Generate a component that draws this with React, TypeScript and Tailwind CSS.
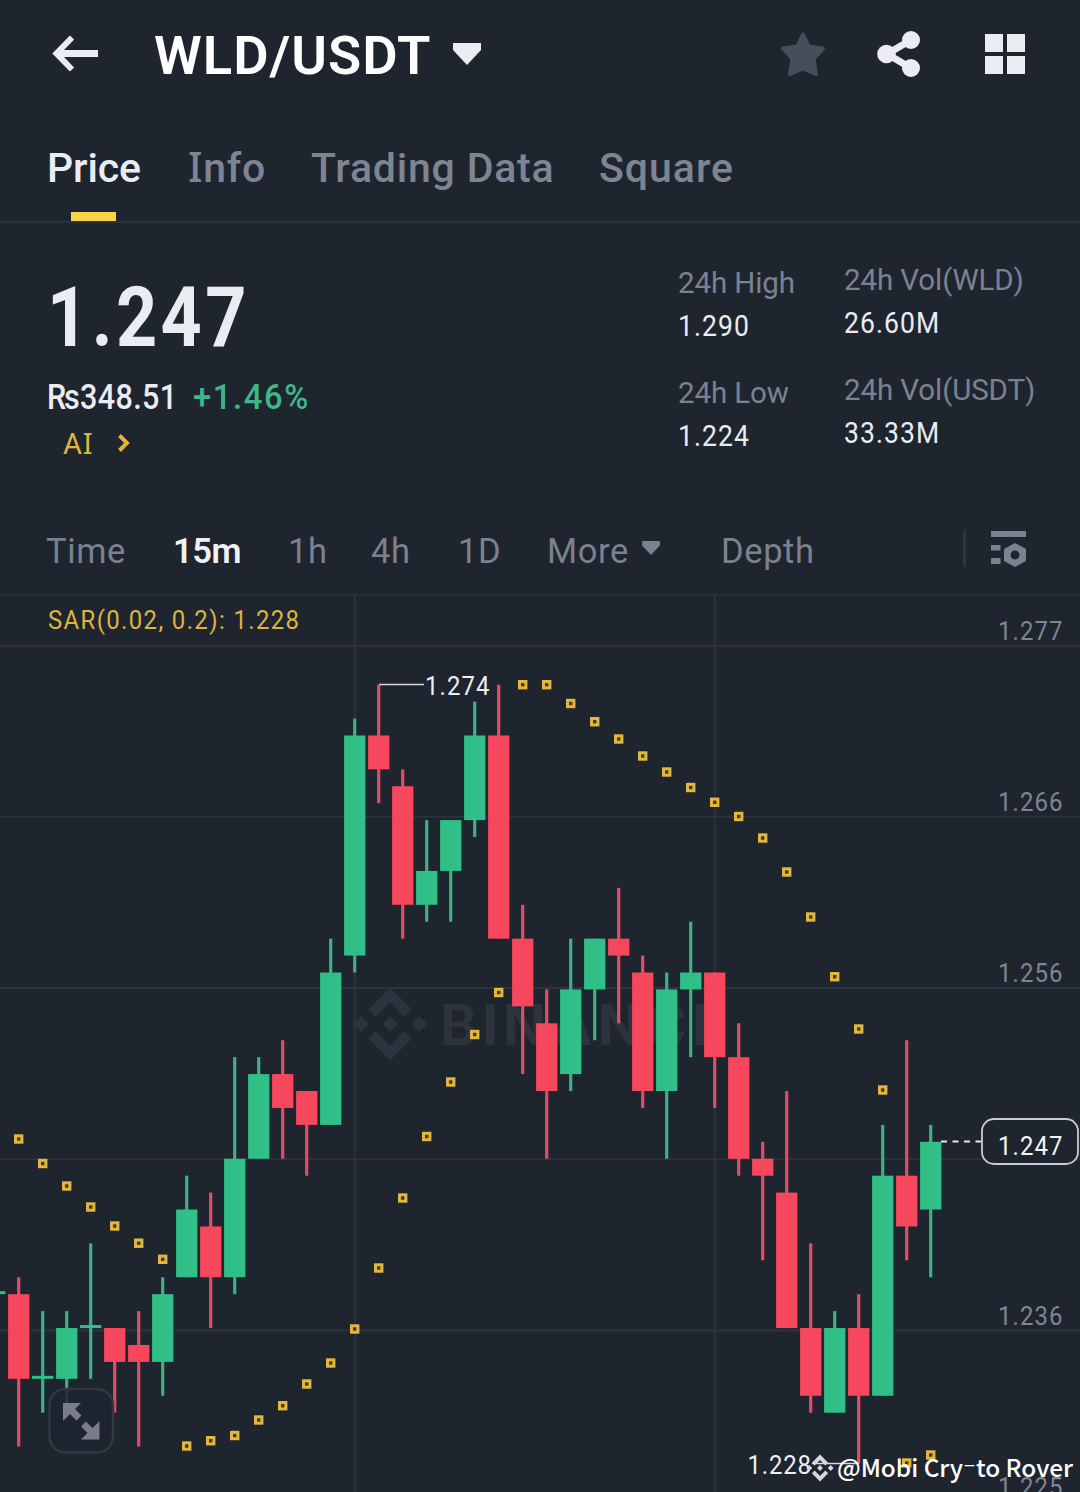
import type { ReactNode } from 'react'

const tabs = [
  { label: 'Price', width: 'w-[141px]', tracking: 'tracking-[-0.1px]' },
  { label: 'Info', width: 'w-[123px]', tracking: 'tracking-[0.7px]' },
  { label: 'Trading Data', width: 'w-[288px]', tracking: 'tracking-[0.8px]' },
  { label: 'Square', width: 'w-[140px]', tracking: 'tracking-[1px]' },
]

const intervals = [
  { label: 'Time', width: 'w-[127px]' },
  { label: '15m', width: 'w-[115px]' },
  { label: '1h', width: 'w-[83px]' },
  { label: '4h', width: 'w-[87px]' },
  { label: '1D', width: 'w-[89px]' },
  { label: 'More', width: 'w-[174px]' },
  { label: 'Depth', width: 'w-[100px]' },
]

// [open, close, high, low] in thousandths, one entry per 15m candle
const candles = [
  [1238, 1238, 1238, 1238],
  [1238, 1233, 1239, 1229],
  [1233, 1233, 1237, 1231],
  [1233, 1236, 1237, 1231],
  [1236, 1236, 1241, 1233],
  [1236, 1234, 1236, 1231],
  [1235, 1234, 1237, 1229],
  [1234, 1238, 1239, 1232],
  [1239, 1243, 1245, 1239],
  [1242, 1239, 1244, 1236],
  [1239, 1246, 1252, 1238],
  [1246, 1251, 1252, 1246],
  [1251, 1249, 1253, 1246],
  [1250, 1248, 1250, 1245],
  [1248, 1257, 1259, 1248],
  [1258, 1271, 1272, 1257],
  [1271, 1269, 1274, 1267],
  [1268, 1261, 1269, 1259],
  [1261, 1263, 1266, 1260],
  [1263, 1266, 1266, 1260],
  [1266, 1271, 1273, 1265],
  [1271, 1259, 1274, 1259],
  [1259, 1255, 1261, 1251],
  [1254, 1250, 1256, 1246],
  [1251, 1256, 1259, 1250],
  [1256, 1259, 1259, 1253],
  [1259, 1258, 1262, 1254],
  [1257, 1250, 1258, 1249],
  [1250, 1256, 1257, 1246],
  [1256, 1257, 1260, 1252],
  [1257, 1252, 1257, 1249],
  [1252, 1246, 1254, 1245],
  [1246, 1245, 1247, 1240],
  [1244, 1236, 1250, 1236],
  [1236, 1232, 1241, 1231],
  [1231, 1236, 1237, 1231],
  [1236, 1232, 1238, 1228],
  [1232, 1245, 1248, 1232],
  [1245, 1242, 1253, 1240],
  [1243, 1247, 1248, 1239],
]

// Parabolic SAR, chart y of each dot starting at the second candle
const sar = [
  1139, 1163.5, 1186, 1207, 1226, 1243.2, 1259.3, 1446, 1440.7, 1435.5, 1420, 1405.7, 1384, 1363,
  1329, 1268, 1198, 1136.5, 1082, 1034.5, 992.5, 684.7, 684.7, 703.5, 721.7, 739, 756, 772, 787.5,
  802.3, 816.5, 838, 872, 917, 976.7, 1029, 1090, 1463, 1455,
]

const axisLabels = [
  { text: '1.277', y: 640 },
  { text: '1.266', y: 811 },
  { text: '1.256', y: 982 },
  { text: '1.236', y: 1325 },
  { text: '1.225', y: 1496 },
]

const CHART_TOP = 594
const STEP = 24
const CONDENSE = 0.91

const priceY = (price: number) => 684.7 + (1274 - price) * 16.93
const candleX = (index: number) => index * STEP - 5.3

function SerifI() {
  return <span className="font-['Noto_Sans',sans-serif] leading-none">I</span>
}

function TriangleDown({ className }: { className: string }) {
  return (
    <svg className={className} viewBox="0 0 28 22" fill="currentColor">
      <path d="M0 0h28v7L14 22 0 7z" />
    </svg>
  )
}

function BinanceMark() {
  return (
    <>
      <path d="M0-36.500 22-14.500 14.500-7 0-21.500-14.500-7-22-14.500z" />
      <path d="M0 36.500 22 14.500 14.500 7 0 21.500-14.500 7-22 14.500z" />
      <path d="M0-8 8 0 0 8-8 0z" />
      <path d="M-29-8-21 0-29 8-37 0z" />
      <path d="M29-8 37 0 29 8 21 0z" />
    </>
  )
}

function Header() {
  return (
    <header className="flex h-[112px] items-center pr-[55px] pl-[52px] text-[#eaecf2]">
      <svg className="-mt-1.5 h-[38px] w-[46px]" viewBox="0 0 46 38" fill="none" stroke="currentColor">
        <path d="M46 19.500H5" strokeWidth="7" />
        <path d="M20 3.500 4.500 19.500 20 35.500" strokeWidth="6" />
      </svg>
      <h1 className="ml-[56px] w-[276px] text-[54.400px] font-semibold tracking-[1px] whitespace-nowrap text-white">WLD/USDT</h1>
      <TriangleDown className="-mt-1 ml-[23px] h-[22px] w-[28px]" />
      <div className="-mt-[5px] ml-auto flex items-center">
        <svg className="h-[48px] w-[46px] text-[#474d5b]" viewBox="0 0 46 48" fill="currentColor" stroke="currentColor" strokeWidth="4" strokeLinejoin="round">
          <path d="m23 4.500 5.500 12 14.500 2-9.500 10.500 2.500 15L23 38.500 10 44l2.500-15L3 18.500l14.500-2z" />
        </svg>
        <svg className="ml-[51px] h-[46px] w-[44px]" viewBox="0 0 44 46" fill="currentColor">
          <path d="M34 9 10 23l24 14" fill="none" stroke="currentColor" strokeWidth="7" />
          <circle cx="34" cy="9" r="9" />
          <circle cx="9.500" cy="23" r="9.300" />
          <circle cx="34" cy="37" r="9" />
        </svg>
        <div className="ml-[64px] grid grid-cols-2 gap-1">
          {[0, 1, 2, 3].map((i) => (
            <span key={i} className="size-[18px] bg-current" />
          ))}
        </div>
      </div>
    </header>
  )
}

function Tabs() {
  return (
    <nav className="flex h-[111px] border-b-2 border-[#2c323d] pt-[13px] pl-[47px] text-[41px] leading-[87px] font-medium">
      {tabs.map((tab, i) => (
        <div key={tab.label} className={tab.width}>
          <div className="inline-flex flex-col items-center">
            <span className={`whitespace-nowrap ${tab.tracking} ${i === 0 ? 'text-[#eaecf2]' : 'text-[#7e8592]'}`}>
              {tab.label === 'Info' ? <><SerifI />nfo</> : tab.label}
            </span>
            {i === 0 && <span className="mr-px h-[9px] w-[45px] bg-[#fad446]" />}
          </div>
        </div>
      ))}
    </nav>
  )
}

function StatColumn({ className, children }: { className: string; children: ReactNode }) {
  return <div className={`flex flex-col whitespace-nowrap text-[29.500px] ${className}`}>{children}</div>
}

function Stat({ label, value }: { label: string; value: string }) {
  return (
    <div>
      <div className="tracking-[-0.1px] text-[#7b828f]">{label}</div>
      <div className="origin-left scale-x-[0.9] tracking-[1.200px] text-[#eaecf2]">{value}</div>
    </div>
  )
}

function Summary() {
  return (
    <section className="flex h-[285px] pl-[47px]">
      <div className="w-[631px] pt-[45px]">
        <div className="origin-left scale-x-[0.86] text-[83.500px] leading-[99px] font-bold tracking-[4px] text-[#eaecf2]">1.247</div>
        <div className="flex text-[35.500px] leading-[60px] font-medium">
          <span className="w-[146px] origin-left scale-x-[0.86] tracking-[0.4px] text-[#eaecf2]">₨348.51</span>
          <span className="origin-left scale-x-[0.92] tracking-[1.800px] text-[#3fb687]">+1.46%</span>
        </div>
        <div className="flex items-center pl-[16px] text-[29px] leading-[34px] text-[#e0b53c]">
          <span className="w-[55px] tracking-[0.7px]">A<SerifI /></span>
          <svg className="-mt-0.5 h-[18px] w-[12px]" viewBox="0 0 12 18" fill="none" stroke="currentColor" strokeWidth="4">
            <path d="m1.500 1.500 7.500 7.500-7.500 7.500" />
          </svg>
        </div>
      </div>
      <StatColumn className="w-[166px] gap-[24px] pt-[39px] leading-[43px]">
        <Stat label="24h High" value="1.290" />
        <Stat label="24h Low" value="1.224" />
      </StatColumn>
      <StatColumn className="gap-[25px] pt-[36px] leading-[42.500px]">
        <Stat label="24h Vol(WLD)" value="26.60M" />
        <Stat label="24h Vol(USDT)" value="33.33M" />
      </StatColumn>
    </section>
  )
}

function IntervalBar() {
  return (
    <div className="flex h-[86px] items-center pr-[54px] pl-[46px] text-[34.500px] tracking-[0.6px] text-[#7b818e]">
      {intervals.map((item) => (
        <div key={item.label} className={`flex shrink-0 items-center pt-[2px] ${item.width}`}>
          <span className={item.label === '15m' ? 'font-semibold tracking-[-0.5px] text-[#f0f1f6]' : ''}>{item.label}</span>
          {item.label === 'More' && <TriangleDown className="-mt-2 ml-[13px] h-[14px] w-[18px]" />}
        </div>
      ))}
      <div className="-mt-1 ml-auto h-[36px] w-[3px] bg-[#30363f]" />
      <svg className="-mt-1 ml-[25px] h-[36px] w-[35px]" viewBox="0 0 35 36" fill="currentColor">
        <path d="M0 0h35v6H0zM0 14h9.500v5.500H0zM0 27h9.500v6H0z" />
        <path fillRule="evenodd" d="m24 12 11 6v12l-11 6-11-6V18zm0 7.500a4.500 4.500 0 1 0 0 9 4.500 4.500 0 0 0 0-9z" />
      </svg>
    </div>
  )
}

function Candle({ index, data }: { index: number; data: number[] }) {
  const [open, close, high, low] = data
  const x = candleX(index)
  const rising = close >= open
  const top = priceY(Math.max(open, close))
  const bottom = priceY(Math.min(open, close))
  const flat = open === close

  return (
    <g fill={rising ? '#2fbf87' : '#f7475d'}>
      {high > low && (
        <rect x={x - 1.6} y={priceY(high)} width={3.2} height={priceY(low) - priceY(high)} fill={rising ? '#3db184' : '#df4e62'} />
      )}
      <rect x={x - 10.6} y={flat ? top - 3 : top} width={21.3} height={flat ? 3 : bottom - top} />
    </g>
  )
}

// Condensed label with a fixed drawn width
function ChartText({ x, y, width, fill, children }: { x: number; y: number; width: number; fill?: string; children: string }) {
  return (
    <text transform={`translate(${x} ${y}) scale(${CONDENSE} 1)`} textLength={width / CONDENSE} fill={fill}>
      {children}
    </text>
  )
}

function Chart() {
  return (
    <svg className="block h-[898px] w-[1080px]" viewBox={`0 ${CHART_TOP} 1080 898`} fontSize="26.300">
      <g stroke="#2d333e" strokeWidth="2">
        <path d="M0 595h1080" strokeWidth="3" stroke="#282e39" />
        {[645.7, 816.8, 988, 1159.2, 1330.5].map((y) => (
          <path key={y} d={`M0 ${y}h1080`} />
        ))}
        <path d="M354.800 595v897M714.800 595v897" />
      </g>

      {/* Watermark behind the candles */}
      <g fill="#2c323e">
        <g transform="translate(390 1024)">
          <BinanceMark />
        </g>
        <text x="440" y="1045" fontSize="56" fontWeight="700" fontFamily="Inter, sans-serif" textLength="286">BINANCE</text>
      </g>

      {candles.map((data, i) => (
        <Candle key={i} index={i} data={data} />
      ))}

      {sar.map((y, i) => (
        <rect key={i} x={candleX(i + 1) - 3.2} y={y - 3.2} width="6.400" height="6.400" fill="#4a3713" stroke="#e0b840" strokeWidth="3" />
      ))}

      <ChartText x={48} y={629} width={251} fill="#deb43e">SAR(0.02, 0.2): 1.228</ChartText>

      <g fill="#7f8592">
        {axisLabels.map((label) => (
          <ChartText key={label.text} x={998} y={label.y} width={64.5}>{label.text}</ChartText>
        ))}
      </g>

      {/* High and low callouts */}
      <g fill="#eff0f5">
        <path d="M379 684.500h45M812 1463.500h47" stroke="#d5d7dd" strokeWidth="1.700" />
        <ChartText x={425} y={695} width={64.5}>1.274</ChartText>
        <ChartText x={747.5} y={1474} width={63.5}>1.228</ChartText>
      </g>

      {/* Last price */}
      <path d="M941 1141.500h42" stroke="#e4e6ec" strokeWidth="2" strokeDasharray="6 5.500" />
      <rect x="982" y="1119" width="96" height="45" rx="12" fill="#1f252f" stroke="#c9ccd3" strokeWidth="1.800" />
      <ChartText x={998} y={1154.7} width={64.5} fill="#f4f5f9">1.247</ChartText>

      {/* Fullscreen button */}
      <rect x="49.500" y="1389" width="63.500" height="63.500" rx="16" fill="#1f252f" fillOpacity="0.850" stroke="#323842" strokeWidth="2.500" />
      <g fill="#787d89">
        <path d="M63 1403h18l-6 6 6.500 6.500-5 5-6.500-6.500-7 7z" />
        <path d="M99.500 1439.500h-18.500l6.500-6.500-6.500-6.500 5-5 6.500 6.500 7-7z" />
      </g>

      {/* Author credit */}
      <g fill="#d6d8dc" transform="translate(820 1468) scale(0.370)">
        <BinanceMark />
      </g>
      <text
        x="837"
        y="1477"
        fill="#fff"
        fontSize="24"
        fontWeight="500"
        fontFamily="'Noto Sans CJK SC', sans-serif"
        textLength="236"
        lengthAdjust="spacingAndGlyphs"
      >
        @Mobi Cry<tspan fontFamily="'DejaVu Sans'">⁻</tspan>to Rover
      </text>
    </svg>
  )
}

export default function App() {
  return (
    <main className="h-[1492px] w-[1080px] overflow-hidden bg-[#1f252f] font-['Roboto',sans-serif]">
      <Header />
      <Tabs />
      <Summary />
      <IntervalBar />
      <Chart />
    </main>
  )
}
